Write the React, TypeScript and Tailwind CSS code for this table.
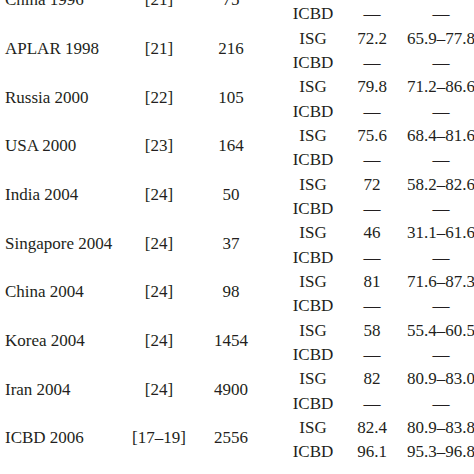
const rows = [
  { name: 'China 1996', ref: '[21]', n: '75', isg: ['—', '—'], icbd: ['—', '—'] },
  { name: 'APLAR 1998', ref: '[21]', n: '216', isg: ['72.2', '65.9–77.8'], icbd: ['—', '—'] },
  { name: 'Russia 2000', ref: '[22]', n: '105', isg: ['79.8', '71.2–86.6'], icbd: ['—', '—'] },
  { name: 'USA 2000', ref: '[23]', n: '164', isg: ['75.6', '68.4–81.6'], icbd: ['—', '—'] },
  { name: 'India 2004', ref: '[24]', n: '50', isg: ['72', '58.2–82.6'], icbd: ['—', '—'] },
  { name: 'Singapore 2004', ref: '[24]', n: '37', isg: ['46', '31.1–61.6'], icbd: ['—', '—'] },
  { name: 'China 2004', ref: '[24]', n: '98', isg: ['81', '71.6–87.3'], icbd: ['—', '—'] },
  { name: 'Korea 2004', ref: '[24]', n: '1454', isg: ['58', '55.4–60.5'], icbd: ['—', '—'] },
  { name: 'Iran 2004', ref: '[24]', n: '4900', isg: ['82', '80.9–83.0'], icbd: ['—', '—'] },
  { name: 'ICBD 2006', ref: '[17–19]', n: '2556', isg: ['82.4', '80.9–83.8'], icbd: ['96.1', '95.3–96.8'] },
]

function Cell({ children, className = '' }: { children: React.ReactNode; className?: string }) {
  return <div className={`flex items-center justify-center whitespace-nowrap ${className}`}>{children}</div>
}

export default function App() {
  return (
    <div
      className="w-[474px] h-[474px] overflow-hidden bg-white text-[#231f20] text-[17px] leading-none"
      style={{ fontFamily: '"Liberation Serif", "Times New Roman", serif' }}
    >
      <div className="-mt-[22.5px]">
        {rows.map((r) => (
          <div
            key={r.name}
            className="grid grid-cols-[125px_68px_76px_88px_30px_108px] grid-rows-[24.33px_24.33px]"
          >
            <div className="row-span-2 flex items-center pl-[5px] whitespace-nowrap -translate-y-[2px]">{r.name}</div>
            <Cell className="row-span-2 -translate-y-[2px]">{r.ref}</Cell>
            <Cell className="row-span-2 -translate-y-[2px]">{r.n}</Cell>
            <Cell>ISG</Cell>
            <Cell>{r.isg[0]}</Cell>
            <Cell>{r.isg[1]}</Cell>
            <Cell>ICBD</Cell>
            <Cell>{r.icbd[0]}</Cell>
            <Cell>{r.icbd[1]}</Cell>
          </div>
        ))}
      </div>
    </div>
  )
}
